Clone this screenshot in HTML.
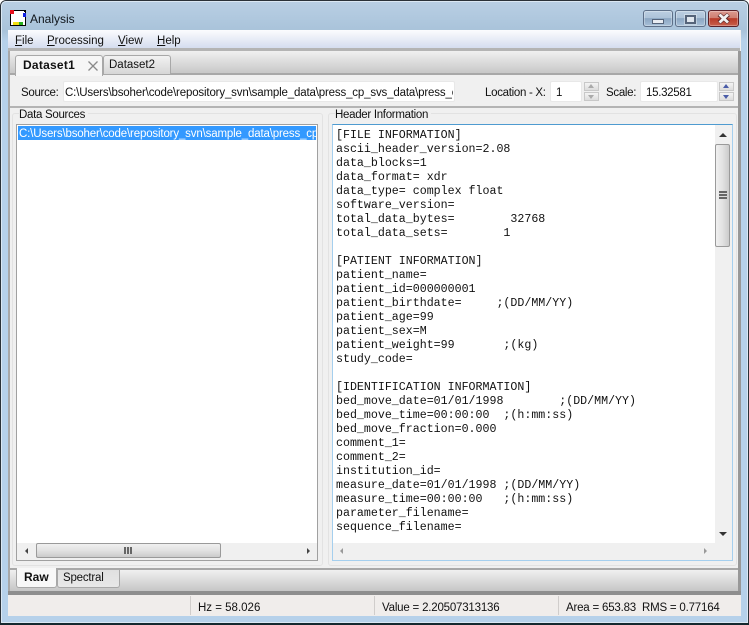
<!DOCTYPE html>
<html><head><meta charset="utf-8">
<style>
html,body{margin:0;padding:0;width:749px;height:625px;overflow:hidden;background:#fff}
*{box-sizing:border-box}
.a{position:absolute}
.t{position:absolute;font:11.5px/14px "Liberation Sans",sans-serif;color:#111;white-space:pre}
.l{letter-spacing:-.3px}
.p{letter-spacing:-.16px}
.s{letter-spacing:-.2px}
u{text-decoration:underline}
.in{position:absolute;background:#fff;border:1px solid #e8e8e8;border-radius:2px}
.sp{position:absolute;width:15px;height:9px;background:linear-gradient(#f4f4f4,#dcdcdc);border:1px solid #c8c8c8}
.wb{position:absolute;top:10px;height:17px;border:1px solid #5d6f88;border-radius:3px;background:linear-gradient(#bccfe2 0,#adc3d9 45%,#8ba6c2 50%,#a8c0d8 100%);box-shadow:inset 0 0 0 1px rgba(255,255,255,.3)}
.tri{position:absolute;width:0;height:0}
</style></head>
<body>
<div class="a" style="left:0;top:0;width:749px;height:625px;background:linear-gradient(#b9cfe4,#a9c3da 30px,#b6d1ea 40px);border:1px solid #2a3138;border-radius:6px 6px 0 0"></div>
<div class="a" style="left:1px;top:1px;width:747px;height:622px;border:1px solid #dbe8f3;border-radius:5px 5px 0 0"></div>
<div class="a" style="left:0;top:623px;width:749px;height:2px;background:#14282e"></div>

<!-- App icon -->
<div class="a" style="left:10px;top:10px;width:16px;height:16px;background:#fff;border:1px solid #000;border-top:none"></div>
<div class="a" style="left:10px;top:10px;width:4px;height:4px;background:#e8101c"></div>
<div class="a" style="left:23px;top:13px;width:3px;height:4px;background:#1020e0"></div>
<div class="a" style="left:19px;top:22px;width:4px;height:3px;background:#28b020"></div>
<div class="a" style="left:13px;top:22px;width:6px;height:3px;background:#f0e010"></div>
<div class="a" style="left:14px;top:10px;width:12px;height:1px;background:#000"></div>
<div class="a" style="left:24px;top:10px;width:2px;height:2px;background:#000"></div>
<div class="t" style="left:30px;top:12px;font-size:12px;color:#10161c">Analysis</div>

<!-- Window buttons -->
<div class="wb" style="left:643px;width:30px"></div>
<div class="a" style="left:652px;top:19px;width:12px;height:5px;background:#e8ecf2;border:1px solid #55647a"></div>
<div class="wb" style="left:675px;width:31px"></div>
<div class="a" style="left:685px;top:15px;width:11px;height:9px;border:2px solid #55647a;background:#dfe6ee;box-shadow:0 0 0 1px rgba(255,255,255,.35)"></div>
<div class="wb" style="left:708px;width:31px;border-color:#5a2028;background:linear-gradient(#dc9a90 0,#cf7f72 45%,#b83a28 50%,#c8604c 100%)"></div>
<svg class="a" style="left:717px;top:13px" width="14" height="11"><path d="M2 1.5 L11.5 9.5 M11.5 1.5 L2 9.5" stroke="#5e2a2a" stroke-width="4.4"/><path d="M2.5 1.5 L11 9.5 M11 1.5 L2.5 9.5" stroke="#f2f2f2" stroke-width="2.8"/></svg>

<!-- Client -->
<div class="a" style="left:8px;top:30px;width:733px;height:586px;background:#f0f0f0"></div>
<!-- Menu -->
<div class="a" style="left:8px;top:30px;width:732px;height:19px;background:linear-gradient(#fbfcfe,#d3dbee)"></div>
<div class="t" style="left:15px;top:34px"><u>F</u>ile</div>
<div class="t" style="left:47px;top:34px"><u>P</u>rocessing</div>
<div class="t" style="left:118px;top:34px"><u>V</u>iew</div>
<div class="t" style="left:157px;top:34px"><u>H</u>elp</div>
<div class="a" style="left:8px;top:48px;width:732px;height:3px;background:#b4b4b4"></div>

<!-- Top tab strip -->
<div class="a" style="left:8px;top:51px;width:732px;height:23px;background:linear-gradient(#f0f0f0,#c6c6c6)"></div>
<div class="a" style="left:8px;top:73px;width:732px;height:2px;background:#a8a8a8"></div>
<div class="a" style="left:738px;top:51px;width:3px;height:545px;background:#989898"></div>
<div class="a" style="left:8px;top:51px;width:2px;height:545px;background:#a8a8a8"></div>
<div class="a" style="left:15px;top:55px;width:88px;height:21px;background:#f6f6f6;border:1px solid #a8a8a8;border-bottom:none;border-radius:3px 3px 0 0"></div>
<div class="t" style="left:23px;top:58px;font-size:12px;font-weight:bold;letter-spacing:.25px">Dataset1</div>
<svg class="a" style="left:87px;top:60px" width="12" height="12"><path d="M1.5 1.5L10.5 10.5M10.5 1.5L1.5 10.5" stroke="#8a8a8a" stroke-width="1.3"/></svg>
<div class="a" style="left:103px;top:55px;width:68px;height:19px;background:linear-gradient(#f2f2f2,#d6d6d6);border:1px solid #a8a8a8;border-bottom:none;border-radius:3px 3px 0 0"></div>
<div class="t" style="left:109px;top:58px">Dataset2</div>

<!-- Source row -->
<div class="t l" style="left:21px;top:86px">Source:</div>
<div class="in" style="left:63px;top:81px;width:392px;height:21px"></div>
<div class="t p" style="left:65px;top:86px;width:388px;overflow:hidden">C:\Users\bsoher\code\repository_svn\sample_data\press_cp_svs_data\press_cp</div>
<div class="t l" style="left:485px;top:86px">Location - X:</div>
<div class="in" style="left:550px;top:81px;width:32px;height:21px"></div>
<div class="t" style="left:556px;top:86px">1</div>
<div class="sp" style="left:584px;top:82px"></div>
<div class="sp" style="left:584px;top:92px"></div>
<div class="tri" style="left:588px;top:84px;border:3.5px solid transparent;border-top:none;border-bottom:4px solid #aaa"></div>
<div class="tri" style="left:588px;top:95px;border:3.5px solid transparent;border-bottom:none;border-top:4px solid #aaa"></div>
<div class="t l" style="left:606px;top:86px">Scale:</div>
<div class="in" style="left:640px;top:81px;width:78px;height:21px"></div>
<div class="t l" style="left:646px;top:86px">15.32581</div>
<div class="sp" style="left:719px;top:82px"></div>
<div class="sp" style="left:719px;top:92px"></div>
<div class="tri" style="left:723px;top:84px;border:3.5px solid transparent;border-top:none;border-bottom:4px solid #4a5ca8"></div>
<div class="tri" style="left:723px;top:95px;border:3.5px solid transparent;border-bottom:none;border-top:4px solid #4a5ca8"></div>

<!-- Line under the row -->
<div class="a" style="left:10px;top:106px;width:728px;height:2px;background:#b4b4b4"></div>

<!-- Left group -->
<div class="a" style="left:12px;top:113px;width:311px;height:453px;border:1px solid #e2e2e2;border-radius:3px"></div>
<div class="t l" style="left:19px;top:108px;background:#f0f0f0;padding-right:3px">Data Sources</div>
<div class="a" style="left:16px;top:124px;width:302px;height:437px;background:#fff;border:1px solid #a0a0a0"></div>
<div class="a" style="left:18px;top:126px;width:298px;height:14px;background:#3399ff"></div>
<div class="t p" style="left:19px;top:127px;width:297px;height:13px;overflow:hidden;color:#fff">C:\Users\bsoher\code\repository_svn\sample_data\press_cp</div>
<!-- Left hscroll -->
<div class="a" style="left:17px;top:543px;width:300px;height:17px;background:#f0f0f0"></div>
<div class="tri" style="left:25px;top:547.5px;border:3.5px solid transparent;border-left:none;border-right:3.5px solid #444"></div>
<div class="a" style="left:36px;top:543px;width:185px;height:15px;background:linear-gradient(#f0f0f0,#e2e2e2 50%,#cbcbcb);border:1px solid #9a9a9a;border-radius:2px"></div>
<div class="a" style="left:124px;top:547px;width:8px;height:7px;background:repeating-linear-gradient(90deg,#666 0,#666 2px,#ddd 2px,#ddd 3px)"></div>
<div class="tri" style="left:307px;top:547.5px;border:3.5px solid transparent;border-right:none;border-left:3.5px solid #444"></div>

<!-- Right group -->
<div class="a" style="left:328px;top:113px;width:409px;height:453px;border:1px solid #e2e2e2;border-radius:3px"></div>
<div class="t l" style="left:335px;top:108px;background:#f0f0f0;padding-right:3px">Header Information</div>
<div class="a" style="left:332px;top:124px;width:401px;height:437px;background:#fff;border:1px solid #a5cfee;border-top-color:#4e9bd0"></div>
<div class="a" style="left:336px;top:129px;font:11.64px/14px 'Liberation Mono',monospace;color:#111;white-space:pre">[FILE INFORMATION]
ascii_header_version=2.08
data_blocks=1
data_format= xdr
data_type= complex float
software_version=
total_data_bytes=        32768
total_data_sets=        1

[PATIENT INFORMATION]
patient_name=
patient_id=000000001
patient_birthdate=     ;(DD/MM/YY)
patient_age=99
patient_sex=M
patient_weight=99       ;(kg)
study_code=

[IDENTIFICATION INFORMATION]
bed_move_date=01/01/1998        ;(DD/MM/YY)
bed_move_time=00:00:00  ;(h:mm:ss)
bed_move_fraction=0.000
comment_1=
comment_2=
institution_id=
measure_date=01/01/1998 ;(DD/MM/YY)
measure_time=00:00:00   ;(h:mm:ss)
parameter_filename=
sequence_filename=</div>
<!-- Right vscroll -->
<div class="a" style="left:715px;top:125px;width:17px;height:418px;background:#f0f0f0"></div>
<div class="tri" style="left:719px;top:133px;border:4px solid transparent;border-top:none;border-bottom:4px solid #333"></div>
<div class="a" style="left:715px;top:144px;width:15px;height:103px;background:linear-gradient(90deg,#f0f0f0,#e2e2e2 50%,#cbcbcb);border:1px solid #9a9a9a;border-radius:2px"></div>
<div class="a" style="left:719px;top:191px;width:8px;height:8px;background:repeating-linear-gradient(#666 0,#666 2px,#ddd 2px,#ddd 3px)"></div>
<div class="tri" style="left:719px;top:532px;border:4px solid transparent;border-bottom:none;border-top:4px solid #333"></div>
<!-- Right hscroll -->
<div class="a" style="left:333px;top:543px;width:399px;height:17px;background:#f0f0f0"></div>
<div class="tri" style="left:340px;top:547.5px;border:3.5px solid transparent;border-left:none;border-right:3.5px solid #999"></div>
<div class="tri" style="left:704px;top:547.5px;border:3.5px solid transparent;border-right:none;border-left:3.5px solid #999"></div>

<!-- Bottom tab strip -->
<div class="a" style="left:10px;top:568px;width:728px;height:2px;background:#a8a8a8"></div>
<div class="a" style="left:10px;top:570px;width:728px;height:21px;background:linear-gradient(#f0f0f0,#c6c6c6)"></div>
<div class="a" style="left:16px;top:568px;width:41px;height:20px;background:#f8f8f8;border:1px solid #a8a8a8;border-top:none;border-radius:0 0 3px 3px"></div>
<div class="t" style="left:24px;top:570px;font-size:12px;font-weight:bold">Raw</div>
<div class="a" style="left:57px;top:570px;width:63px;height:18px;background:linear-gradient(#e0e0e0,#e8e8e8);border:1px solid #a8a8a8;border-top:none;border-radius:0 0 3px 3px"></div>
<div class="t s" style="left:63px;top:571px">Spectral</div>
<div class="a" style="left:8px;top:591px;width:733px;height:4px;background:#8e8e8e"></div>

<!-- Status bar -->
<div class="a" style="left:8px;top:595px;width:733px;height:21px;background:#f0edeb"></div>
<div class="a" style="left:190px;top:596px;width:1px;height:19px;background:#d0cdcb"></div>
<div class="a" style="left:374px;top:596px;width:1px;height:19px;background:#d0cdcb"></div>
<div class="a" style="left:558px;top:596px;width:1px;height:19px;background:#d0cdcb"></div>
<div class="t" style="left:198px;top:601px">Hz = 58.026</div>
<div class="t s" style="left:382px;top:601px">Value = 2.20507313136</div>
<div class="t s" style="left:566px;top:601px">Area = 653.83  RMS = 0.77164</div>
</body></html>
